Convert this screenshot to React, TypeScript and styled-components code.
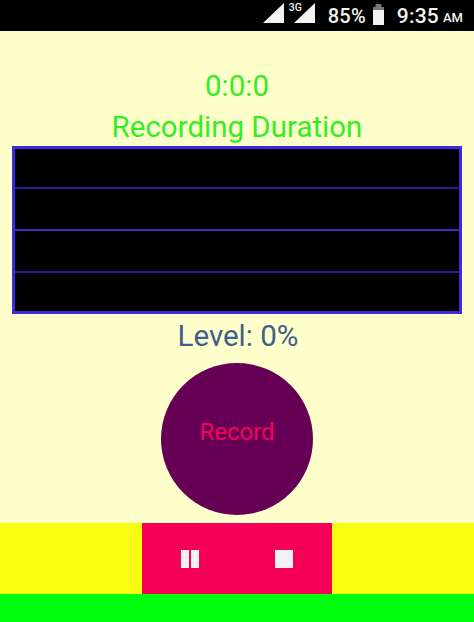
import styled, { createGlobalStyle } from 'styled-components'

const Global = createGlobalStyle`
    html, body {
        margin: 0;
        padding: 0;
        background: #ffffcc;
    }
    * {
        box-sizing: border-box;
    }
`

const Screen = styled.div`
    width: 474px;
    height: 622px;
    display: flex;
    flex-direction: column;
    overflow: hidden;
    font-family: Roboto, 'Liberation Sans', sans-serif;
    background: #ffffcc;
`

const StatusBar = styled.div`
    height: 31px;
    flex: none;
    display: flex;
    align-items: center;
    justify-content: flex-end;
    padding-right: 11px;
    background: #000;
    color: #f2f2f2;
`

const SignalWrap = styled.div`
    position: relative;
    width: 56px;
    height: 24px;
    margin-right: 10px;
    margin-top: -1px;
`

const Signal = styled.svg`
    display: block;
    width: 56px;
    height: 24px;
`

const NetworkType = styled.span`
    position: absolute;
    left: 27px;
    top: 0;
    font-size: 10.5px;
    line-height: 10px;
    font-weight: 500;
`

const Percent = styled.span`
    font-size: 20px;
    font-weight: 500;
    letter-spacing: 0.2px;
`

const Battery = styled.svg`
    width: 13px;
    height: 21px;
    margin: -2px 12px 0 6px;
`

const Clock = styled.span`
    font-size: 21px;
    font-weight: 500;
    letter-spacing: 0.2px;
`

const Meridiem = styled.span`
    font-size: 13px;
    font-weight: 500;
    margin-left: 4px;
    margin-top: 3px;
`

const Body = styled.main`
    flex: 1;
    display: flex;
    flex-direction: column;
    align-items: center;
    padding-top: 35px;
`

const Timer = styled.div`
    font-size: 29.5px;
    line-height: 40px;
    color: #33ee22;
`

const Caption = styled.div`
    font-size: 29.5px;
    line-height: 42px;
    height: 40px;
    color: #33ee22;
`

const Meter = styled.div`
    width: 450px;
    height: 168px;
    flex: none;
    display: grid;
    grid-template-rows: 40px 42px 42px 1fr;
    background: #000;
    border: 3px solid #4029dc;
`

const MeterRow = styled.div<{ $bright?: boolean }>`
    border-bottom: 2px solid ${(p) => (p.$bright ? '#3f28c4' : '#2c1a96')};
    &:last-child {
        border-bottom: 0;
    }
`

const Level = styled.div`
    margin-top: 4px;
    padding-left: 2px;
    font-size: 29.5px;
    line-height: 37px;
    color: #3d5f8e;
`

const RecordButton = styled.button`
    width: 152px;
    height: 152px;
    flex: none;
    margin-top: 8px;
    padding: 0 0 14px;
    border: 0;
    border-radius: 50%;
    background: #660055;
    color: #f50057;
    font-family: inherit;
    font-size: 24px;
`

const Controls = styled.div`
    height: 71px;
    flex: none;
    display: flex;
    justify-content: center;
    background: #f5ff0f;
`

const ControlGroup = styled.div`
    width: 190px;
    display: flex;
    align-items: center;
    justify-content: space-between;
    padding: 0 39px 0 39px;
    background: #f50057;
`

const PauseIcon = styled.div`
    width: 18px;
    height: 18px;
    display: flex;
    justify-content: space-between;
    &::before,
    &::after {
        content: '';
        width: 8px;
        background: #f2f2f5;
    }
`

const StopIcon = styled.div`
    width: 18px;
    height: 18px;
    background: #f2f2f5;
`

const BottomBar = styled.div`
    height: 28px;
    flex: none;
    background: #00ff0c;
`

const App = () => {
    return (
        <Screen>
            <Global />
            <StatusBar>
                <SignalWrap>
                    <Signal viewBox='0 0 56 24'>
                        <polygon points='1,20 22,20 22,0' fill='#f2f2f2' />
                        <polygon points='32,20 53,20 53,0' fill='#f2f2f2' />
                    </Signal>
                    <NetworkType>3G</NetworkType>
                </SignalWrap>
                <Percent>85%</Percent>
                <Battery viewBox='0 0 13 21'>
                    <rect x='3.5' y='0' width='6' height='3' fill='#777' />
                    <rect x='1' y='3' width='11' height='3' fill='#777' />
                    <rect x='1' y='6' width='11' height='15' fill='#f2f2f2' />
                </Battery>
                <Clock>9:35</Clock>
                <Meridiem>AM</Meridiem>
            </StatusBar>
            <Body>
                <Timer>0:0:0</Timer>
                <Caption>Recording Duration</Caption>
                <Meter>
                    <MeterRow />
                    <MeterRow $bright />
                    <MeterRow />
                    <MeterRow />
                </Meter>
                <Level>Level: 0%</Level>
                <RecordButton>Record</RecordButton>
            </Body>
            <Controls>
                <ControlGroup>
                    <PauseIcon />
                    <StopIcon />
                </ControlGroup>
            </Controls>
            <BottomBar />
        </Screen>
    )
}

export default App
